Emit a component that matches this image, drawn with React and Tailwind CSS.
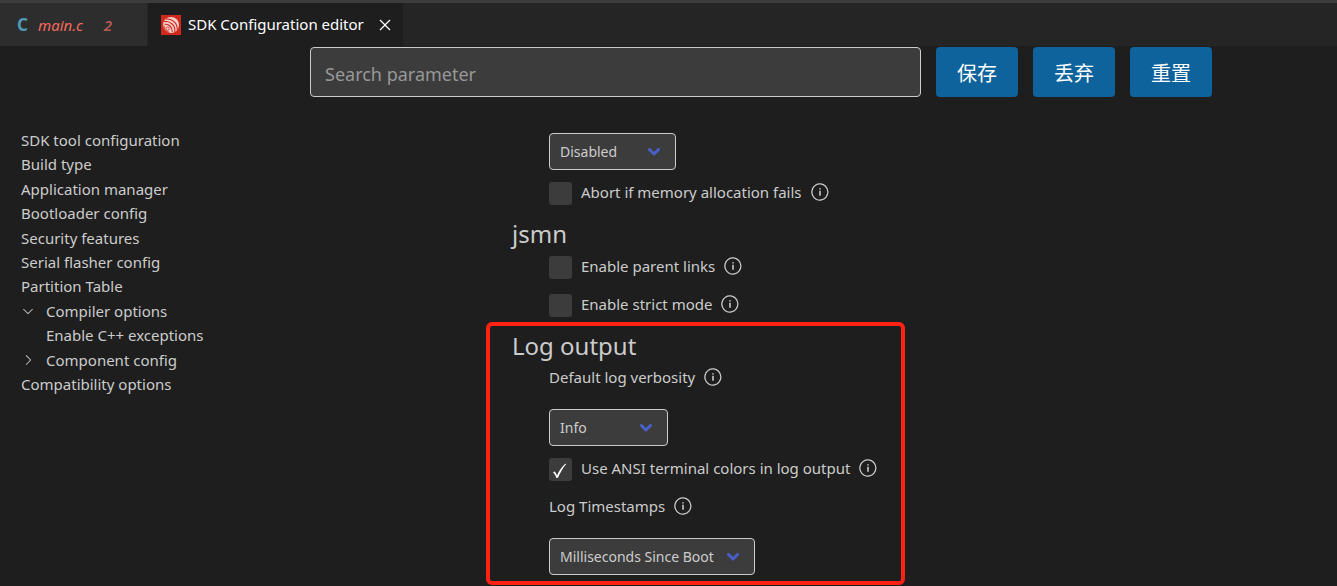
import { useState } from "react";
import { VscChevronDown, VscChevronRight, VscClose, VscInfo } from "react-icons/vsc";

const FONT = "font-['Noto_Sans','Noto_Sans_CJK_SC',sans-serif]";

function EspressifLogo() {
  return (
    <svg viewBox="0 0 20 20" className="size-5 shrink-0" aria-hidden="true">
      <rect width="20" height="20" fill="#d0281c" />
      <circle cx="10" cy="10" r="8" fill="#f3cfca" />
      <g fill="none" stroke="#d0281c" strokeWidth="1.1" strokeLinecap="round">
        <path d="M5.2 4.2C10.8 3 16.8 8.6 16.2 14.6" />
        <path d="M3.6 6.6C9.4 5.6 14.6 10.6 13.8 16.8" />
        <path d="M4 9.3C8 9 11.6 12.4 11.2 16.6" />
        <path d="M3 11C2.8 14 5 16.6 8 17.2" />
      </g>
      <circle cx="6.6" cy="13.6" r="1.7" fill="#f3cfca" stroke="#d0281c" strokeWidth="0.8" />
    </svg>
  );
}

function InfoButton({ name }) {
  return (
    <button type="button" aria-label={`About ${name}`} className="shrink-0">
      <VscInfo className="size-5" />
    </button>
  );
}

function Dropdown({ id, label, options, width }) {
  return (
    <div className={`relative ${width}`}>
      <select
        id={id}
        aria-label={label}
        className="h-[37px] w-full appearance-none rounded border border-[#cccccc] bg-[#3c3c3c] pl-2.5 text-sm text-[#cccccc]"
      >
        {options.map((o) => (
          <option key={o}>{o}</option>
        ))}
      </select>
      <svg
        viewBox="0 0 12 8"
        aria-hidden="true"
        className="pointer-events-none absolute top-[15px] right-4 h-2 w-3 fill-none stroke-[#485fc7] stroke-3"
      >
        <path d="M1.500 1.500 6 6l4.500-4.500" strokeLinecap="round" strokeLinejoin="round" />
      </svg>
    </div>
  );
}

function CheckRow({ id, label, initial = false }) {
  const [checked, setChecked] = useState(initial);
  return (
    <div className="flex h-[23px] items-start">
      <span className="relative size-[23px] shrink-0">
        <input
          id={id}
          type="checkbox"
          checked={checked}
          onChange={(e) => setChecked(e.target.checked)}
          className="block size-full appearance-none rounded-[3px] bg-[#3c3c3c]"
        />
        {checked && (
          <svg viewBox="0 0 23 23" aria-hidden="true" className="pointer-events-none absolute inset-0 fill-white">
            <path d="M4 14.300 5.800 13.400C6.800 14.600 7.500 16 8 17.400 10.200 12.600 12.800 8.800 16.200 5.700L17.200 6C13.900 10 11.200 14.500 9 19.700L7.400 19.900C6.500 17.700 5.500 15.800 4 14.300Z" />
          </svg>
        )}
      </span>
      <label htmlFor={id} className="mr-2 ml-[9px] leading-5">
        {label}
      </label>
      <InfoButton name={label} />
    </div>
  );
}

function FieldLabel({ htmlFor, children }) {
  return (
    <div className="flex h-[22px] items-center gap-2">
      <label htmlFor={htmlFor}>{children}</label>
      <InfoButton name={children} />
    </div>
  );
}

function NavLink({ children, indent = false, icon }) {
  return (
    <li>
      <a href="#section" className="flex items-center leading-6">
        {(icon || indent) && <span className="w-[25px] shrink-0">{icon}</span>}
        {children}
      </a>
    </li>
  );
}

function ActionButton({ children }) {
  return (
    <button type="button" className="w-[82px] shrink-0 rounded bg-[#0e639c] pt-1 text-xl text-white">
      {children}
    </button>
  );
}

export default function App() {
  return (
    <div className={`min-h-screen bg-[#1e1e1e] text-[15px] text-[#cccccc] ${FONT}`}>
      <div className="flex h-[46px] border-t-[3px] border-[#3c3c3c] bg-[#252526]" role="tablist">
        <button
          type="button"
          role="tab"
          aria-selected="false"
          className="flex w-[147px] items-center bg-[#2d2d2d] pt-px pl-[17px] text-[#f46a5e] italic"
        >
          <span className="w-[21px] text-left text-[17px] font-bold text-[#519aba] not-italic">C</span>
          main.c
          <span className="ml-[21px] font-semibold text-[#b85a54]">2</span>
        </button>
        <div className="ml-px flex w-[255px] items-center bg-[#1e1e1e] pl-[13px] text-white">
          <button type="button" role="tab" aria-selected="true" className="flex items-center gap-[7px] whitespace-nowrap">
            <EspressifLogo />
            SDK Configuration editor
          </button>
          <button type="button" aria-label="Close tab" className="ml-[11px]">
            <VscClose className="size-5" />
          </button>
        </div>
      </div>

      <div className="mt-px flex h-[50px] gap-[15px] pr-[125px] pl-[310px]">
        <input
          type="text"
          aria-label="Search parameter"
          placeholder="Search parameter"
          className="min-w-0 flex-1 rounded border border-[#cccccc] bg-[#3c3c3c] px-3.5 pt-1 text-lg text-[#cccccc] placeholder:text-[#989898]"
        />
        <ActionButton>保存</ActionButton>
        <ActionButton>丢弃</ActionButton>
        <ActionButton>重置</ActionButton>
      </div>

      <div className="flex">
        <nav className="w-[486px] shrink-0 pt-[31px] pl-[21px]">
          <ul className="flex min-h-[268px] flex-col justify-between">
            <NavLink>SDK tool configuration</NavLink>
            <NavLink>Build type</NavLink>
            <NavLink>Application manager</NavLink>
            <NavLink>Bootloader config</NavLink>
            <NavLink>Security features</NavLink>
            <NavLink>Serial flasher config</NavLink>
            <NavLink>Partition Table</NavLink>
            <NavLink icon={<VscChevronDown className="-ml-px size-4" />}>Compiler options</NavLink>
            <NavLink indent>Enable C++ exceptions</NavLink>
            <NavLink icon={<VscChevronRight className="-ml-px size-4" />}>Component config</NavLink>
            <NavLink>Compatibility options</NavLink>
          </ul>
        </nav>

        <main className="min-w-0 flex-1 pt-9">
          <section className="pl-[63px]">
            <Dropdown id="poisoning" label="Heap corruption detection" options={["Disabled"]} width="w-[127px]" />
            <div className="mt-3">
              <CheckRow id="abort" label="Abort if memory allocation fails" />
            </div>
          </section>

          <section className="mt-[13px] pl-[26px]">
            <h2 className="text-2xl leading-8">jsmn</h2>
            <div className="mt-[6px] flex flex-col gap-[15px] pl-[37px]">
              <CheckRow id="parent-links" label="Enable parent links" />
              <CheckRow id="strict" label="Enable strict mode" />
            </div>
          </section>

          <section className="mt-[5px] w-full max-w-[419px] rounded-md border-4 border-[#ff2114] pt-1 pb-1.5 pl-[22px]">
            <h2 className="text-2xl leading-8">Log output</h2>
            <div className="mt-1 pl-[37px]">
              <FieldLabel htmlFor="verbosity">Default log verbosity</FieldLabel>
              <div className="mt-[21px] mb-3">
                <Dropdown id="verbosity" options={["Info"]} width="w-[119px]" />
              </div>
              <CheckRow id="ansi" label="Use ANSI terminal colors in log output" initial />
              <div className="mt-3.5 mb-[21px]">
                <FieldLabel htmlFor="timestamps">Log Timestamps</FieldLabel>
              </div>
              <Dropdown id="timestamps" options={["Milliseconds Since Boot"]} width="w-[206px]" />
            </div>
          </section>
        </main>
      </div>
    </div>
  );
}
